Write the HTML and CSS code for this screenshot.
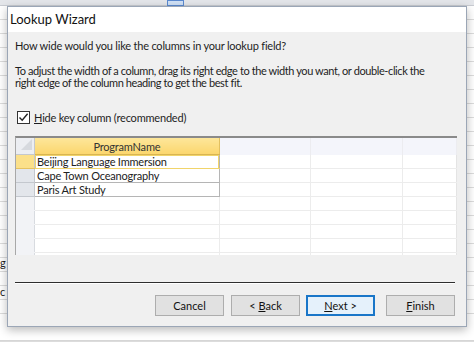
FILE: index.html
```html
<!DOCTYPE html>
<html lang="en">
<head>
    <meta charset="UTF-8">
    <title>Lookup Wizard</title>
    <link rel="stylesheet" href="styles.css">
</head>
<body>
<div class="sheet">
    <div class="sheet-top"><span class="sel-cell"></span></div>
    <span class="frag frag1">g</span>
    <span class="frag frag2">c</span>
    <div class="sheet-foot"></div>
</div>

<div class="dialog">
    <div class="titlebar">Lookup Wizard</div>
    <div class="body">
        <p class="q">How wide would you like the columns in your lookup field?</p>
        <p class="hint">To adjust the width of a column, drag its right edge to the width you want, or double-click the<br>right edge of the column heading to get the best fit.</p>
        <label class="check">
            <span class="box">
                <svg width="11" height="11" viewBox="0 0 11 11"><path d="M1.5 5.5 L4.2 8.3 L9.6 1.8" fill="none" stroke="#222" stroke-width="1.4"/></svg>
            </span>
            <span><u>H</u>ide key column (recommended)</span>
        </label>

        <div class="grid">
            <table>
                <tr class="head">
                    <td class="rs corner"><svg width="18" height="14" viewBox="0 0 18 14"><path d="M16 1 L16 12 L5 12 Z" fill="#d6d9de"/></svg></td>
                    <td class="col active-col">ProgramName</td>
                    <td class="col e"></td>
                    <td class="col e"></td>
                    <td class="col e last"></td>
                </tr>
                <tr class="row cur">
                    <td class="rs on"></td>
                    <td class="cell edit">Beijing Language Immersion</td>
                    <td class="e"></td><td class="e"></td><td class="e last"></td>
                </tr>
                <tr class="row">
                    <td class="rs"></td>
                    <td class="cell">Cape Town Oceanography</td>
                    <td class="e"></td><td class="e"></td><td class="e last"></td>
                </tr>
                <tr class="row">
                    <td class="rs"></td>
                    <td class="cell">Paris Art Study</td>
                    <td class="e"></td><td class="e"></td><td class="e last"></td>
                </tr>
                <tr class="row blank"><td class="rs x"></td><td class="e"></td><td class="e"></td><td class="e"></td><td class="e last"></td></tr>
                <tr class="row blank"><td class="rs x"></td><td class="e"></td><td class="e"></td><td class="e"></td><td class="e last"></td></tr>
                <tr class="row blank"><td class="rs x"></td><td class="e"></td><td class="e"></td><td class="e"></td><td class="e last"></td></tr>
                <tr class="row blank"><td class="rs x"></td><td class="e"></td><td class="e"></td><td class="e"></td><td class="e last"></td></tr>
                <tr class="row blank"><td class="rs x"></td><td class="e"></td><td class="e"></td><td class="e"></td><td class="e last"></td></tr>
            </table>
        </div>

        <div class="sep"></div>

        <div class="buttons">
            <button class="btn">Cancel</button>
            <button class="btn back">&lt; <u>B</u>ack</button>
            <button class="btn default"><u>N</u>ext &gt;</button>
            <button class="btn finish"><u>F</u>inish</button>
        </div>
    </div>
</div>
</body>
</html>
```

FILE: styles.css
```css
*{
    padding: 0;
    margin: 0;
    box-sizing: border-box;
}
body{
    width: 474px;
    height: 344px;
    overflow: hidden;
    position: relative;
    font-family: Lato, "Noto Sans", sans-serif;
    font-size: 11px;
    letter-spacing: -0.2px;
    color: #1e1e1e;
    background: #fff;
}

/* spreadsheet behind the dialog */
.sheet{
    width: 474px;
    height: 344px;
    background:
        repeating-linear-gradient(to bottom, transparent 0, transparent 13px, #dcdcdc 13px, #dcdcdc 14px),
        #fff;
    background-position: 0 6px;
    position: relative;
}
.sheet-top{
    height: 6px;
    background: #e4e6ea;
    border-bottom: 1px solid #c9ccd2;
    position: relative;
}
.sel-cell{
    position: absolute;
    left: 167px;
    top: 0;
    width: 17px;
    height: 6px;
    border: 1px solid #5b8ad0;
    background: #cfe0f6;
}
.frag{
    position: absolute;
    left: 0;
    font-size: 11px;
    color: #222;
    line-height: 12px;
}
.frag1{ top: 257px; }
.frag2{ top: 286px; }
.sheet-foot{
    position: absolute;
    left: 0;
    top: 326px;
    width: 474px;
    height: 15px;
    background: #fff;
    border-bottom: 1px solid #d6d6d6;
}

/* dialog window */
.dialog{
    position: absolute;
    left: 7px;
    top: 6px;
    width: 460px;
    height: 321px;
    border: 1px solid #9ba6b6;
    background: #f0f0f0;
    box-shadow: 0 3px 9px rgba(0,0,0,.28);
}
.titlebar{
    height: 25px;
    background: #fff;
    font-size: 13px;
    letter-spacing: 0;
    line-height: 25px;
    padding-left: 2px;
    color: #111;
}
.body{
    padding: 6px 8px 0 7px;
}
.q{
    line-height: 15px;
}
.hint{
    margin-top: 12px;
    line-height: 12px;
    white-space: nowrap;
    letter-spacing: -0.4px;
}
.check{
    display: flex;
    align-items: center;
    gap: 4px;
    margin-top: 22px;
    margin-left: 2px;
    line-height: 13px;
}
.box{
    width: 13px;
    height: 13px;
    border: 1px solid #333;
    background: #fff;
    display: flex;
    align-items: center;
    justify-content: center;
}

/* datasheet preview */
.grid{
    margin-top: 12px;
    width: 442px;
    height: 119px;
    overflow: hidden;
    background: #fff;
    border-top: 2px solid #8a8a8a;
    border-left: 1px solid #a8a8a8;
}
.grid table{
    border-collapse: collapse;
    table-layout: fixed;
    font-size: 11px;
}
.grid td{
    height: 14px;
    padding: 0 2px;
    line-height: 13px;
    white-space: nowrap;
    overflow: hidden;
}
.rs{
    width: 18px;
    background: #e3e6eb;
    border-right: 1px solid #c4c8ce;
    border-bottom: 1px solid #c4c8ce;
}
.rs.corner{
    padding: 0;
    background: #eceef2;
}
.rs.on{
    background: #fbe08a;
    border-bottom-color: #e6c260;
}
.rs.x{
    background: #f2f3f6;
    border-bottom: 1px solid #f2f3f6;
    border-right: 1px solid #d8dbe0;
}
.col{
    height: 15px;
    text-align: center;
}
.active-col{
    width: 185px;
    background: linear-gradient(#fde69a, #fbd66e);
    border-right: 1px solid #e2c060;
    border-bottom: 1px solid #d9b552;
    color: #333;
}
.head .e{
    width: 92px;
    background: #f4f5fb;
    border-right: 1px solid #ececf0;
}
.head .last{
    width: 54px;
}
.cell{
    border-right: 1px solid #b5b5b5;
    border-bottom: 1px solid #b5b5b5;
    background: #fff;
    color: #222;
}
.cell.edit{
    outline: 1px solid #f1d46a;
    outline-offset: -1px;
    border-bottom-color: #f1d46a;
}
.row .e{
    border-right: 1px solid #ececec;
    border-bottom: 1px solid #ececec;
}
.row .last{
    border-right: 1px solid #e4e4e4;
}

.sep{
    margin-top: 27px;
    width: 440px;
    height: 1px;
    background: #2e2e2e;
    box-shadow: 0 1px 0 #fff;
}

.buttons{
    display: flex;
    margin-top: 12px;
    padding-left: 140px;
}
.btn{
    width: 69px;
    height: 21px;
    border: 1px solid #adadad;
    background: #e1e1e1;
    font-family: Lato, "Noto Sans", sans-serif;
    font-size: 11px;
    color: #111;
}
.back{
    margin-left: 7px;
}
.default{
    margin-left: 6px;
    border: 2px solid #1a76c8;
    background: #e5f1fb;
}
.finish{
    margin-left: 11px;
}
u{
    text-decoration: underline;
    text-underline-offset: 1px;
}
```
